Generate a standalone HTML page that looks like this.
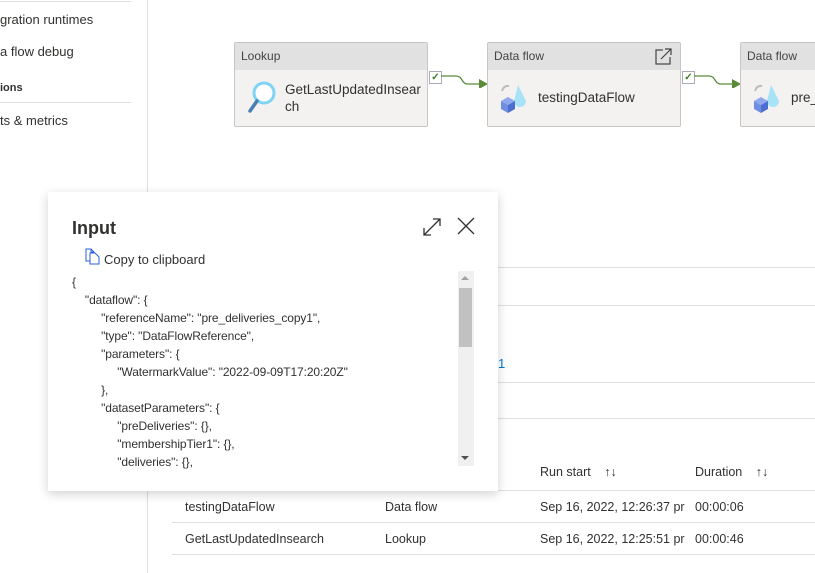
<!DOCTYPE html>
<html><head><style>
body{margin:0;width:815px;height:573px;position:relative;overflow:hidden;background:#fff;font-family:"Liberation Sans",sans-serif;color:#323130}
.a{position:absolute}
.hl{position:absolute;height:1px;background:#e1dfdd}
.node{position:absolute;width:194px;height:85px;background:#f3f2f1;border:1px solid #c8c6c4;border-radius:2px;box-sizing:border-box}
.node .h{height:27px;background:#e1e1e1;font-size:12px;line-height:27px;padding-left:6px;color:#444}
.node .t{position:absolute;font-size:13.5px;color:#323130;line-height:17px}
.chk{position:absolute;width:11px;height:11px;border:1px solid #aab;background:#fff;font-size:10px;line-height:11px;text-align:center;color:#3a7d2a;font-weight:bold}
.code{font-size:12px;line-height:18px;color:#323130;white-space:pre;letter-spacing:-0.1px}
.tb{font-size:12.5px;color:#323130}
</style></head><body>
<div class="a" style="left:147px;top:0;width:1px;height:573px;background:#e1dfdd"></div>
<div class="hl" style="left:0;top:1px;width:131px"></div>
<div class="a" style="left:0;top:12px;font-size:13px">gration runtimes</div>
<div class="a" style="left:0;top:44px;font-size:13px">a flow debug</div>
<div class="a" style="left:0;top:82px;font-size:11px;font-weight:bold">ions</div>
<div class="hl" style="left:0;top:102px;width:131px"></div>
<div class="a" style="left:0;top:113px;font-size:13px">ts &amp; metrics</div>

<div class="node" style="left:234px;top:42px"><div class="h">Lookup</div>
<svg class="a" style="left:12px;top:37px" width="30" height="36"><circle cx="17" cy="13" r="10" fill="#fff" stroke="#7fd3f5" stroke-width="3"/><line x1="10" y1="21" x2="3" y2="31" stroke="#4a7fb5" stroke-width="3.5" stroke-linecap="round"/></svg>
<div class="t" style="left:50px;top:38px">GetLastUpdatedInsear<br>ch</div></div>
<div class="chk" style="left:429px;top:71px">✓</div>
<svg class="a" style="left:441px;top:72px" width="48" height="16"><path d="M0 4 H15 C22 4 20 12 27 12 H40" fill="none" stroke="#5a8a3a" stroke-width="1.3"/><path d="M38 7 L47 12 L38 17Z" fill="#5a8a3a"/></svg>

<div class="node" style="left:487px;top:42px"><div class="h">Data flow</div>
<svg class="a" style="left:167px;top:4px" width="18" height="18"><rect x="1" y="3" width="14" height="14" fill="none" stroke="#444" stroke-width="1.2"/><rect x="8" y="0" width="10" height="10" fill="#e1e1e1"/><path d="M6 12 L16 2 M10 2 H16 V8" fill="none" stroke="#444" stroke-width="1.2"/></svg>
<svg class="a" style="left:10px;top:38px" width="32" height="34"><path d="M20 4 L28 20 A6 6 0 0 1 16 20Z" fill="#a8e2f7"/><path d="M4 10 Q6 4 11 5" fill="none" stroke="#bbb" stroke-width="2"/><path d="M3 20 L10 16 L17 20 L10 24Z" fill="#8fa8ee"/><path d="M3 20 L10 24 V32 L3 28Z" fill="#6f8ee0"/><path d="M10 24 L17 20 V28 L10 32Z" fill="#4c6ed0"/></svg>
<div class="t" style="left:50px;top:46px">testingDataFlow</div></div>
<div class="chk" style="left:682px;top:71px">✓</div>
<svg class="a" style="left:694px;top:72px" width="48" height="16"><path d="M0 4 H15 C22 4 20 12 27 12 H40" fill="none" stroke="#5a8a3a" stroke-width="1.3"/><path d="M38 7 L47 12 L38 17Z" fill="#5a8a3a"/></svg>

<div class="node" style="left:740px;top:42px;width:100px"><div class="h">Data flow</div>
<svg class="a" style="left:10px;top:38px" width="32" height="34"><path d="M20 4 L28 20 A6 6 0 0 1 16 20Z" fill="#a8e2f7"/><path d="M4 10 Q6 4 11 5" fill="none" stroke="#bbb" stroke-width="2"/><path d="M3 20 L10 16 L17 20 L10 24Z" fill="#8fa8ee"/><path d="M3 20 L10 24 V32 L3 28Z" fill="#6f8ee0"/><path d="M10 24 L17 20 V28 L10 32Z" fill="#4c6ed0"/></svg>
<div class="t" style="left:50px;top:46px">pre_</div></div>

<div class="hl" style="left:172px;top:267px;width:643px"></div>
<div class="hl" style="left:172px;top:305px;width:643px"></div>
<div class="hl" style="left:172px;top:382px;width:643px"></div>
<div class="hl" style="left:172px;top:418px;width:643px"></div>
<div class="a" style="left:498px;top:356px;font-size:13px;color:#0078d4">1</div>

<div class="a tb" style="left:540px;top:465px">Run start <span style="margin-left:10px">↑↓</span></div>
<div class="a tb" style="left:695px;top:465px">Duration <span style="margin-left:10px">↑↓</span></div>
<div class="hl" style="left:172px;top:490px;width:643px"></div>
<div class="a tb" style="left:185px;top:500px">testingDataFlow</div>
<div class="a tb" style="left:385px;top:500px">Data flow</div>
<div class="a tb" style="left:540px;top:500px">Sep 16, 2022, 12:26:37 pr</div>
<div class="a tb" style="left:695px;top:500px">00:00:06</div>
<div class="hl" style="left:172px;top:522px;width:643px"></div>
<div class="a tb" style="left:185px;top:532px">GetLastUpdatedInsearch</div>
<div class="a tb" style="left:385px;top:532px">Lookup</div>
<div class="a tb" style="left:540px;top:532px">Sep 16, 2022, 12:25:51 pr</div>
<div class="a tb" style="left:695px;top:532px">00:00:46</div>
<div class="hl" style="left:172px;top:554px;width:643px"></div>

<div class="a" style="left:48px;top:192px;width:450px;height:299px;background:#fff;box-shadow:0 3px 10px rgba(0,0,0,.18)">
<div class="a" style="left:24px;top:26px;font-size:18px;font-weight:bold;color:#323130">Input</div>
<svg class="a" style="left:374px;top:25px" width="20" height="20"><path d="M2 18 L18 2 M11 2 H18 V9 M2 11 V18 H9" fill="none" stroke="#323130" stroke-width="1.3"/></svg>
<svg class="a" style="left:409px;top:25px" width="18" height="18"><path d="M1 1 L17 17 M17 1 L1 17" stroke="#323130" stroke-width="1.3"/></svg>
<svg class="a" style="left:37px;top:56px" width="16" height="17"><path d="M1 1 H6 L9 4 V13 H1Z M6 1 V4 H9" fill="none" stroke="#2b5fd9" stroke-width="1"/><path d="M5 5 H10 L14 9 V16 H5Z" fill="#fff" stroke="#2b5fd9" stroke-width="1"/></svg>
<div class="a" style="left:56px;top:60px;font-size:13px">Copy to clipboard</div>
<div class="a code" style="left:24px;top:81px">{
    "dataflow": {
         "referenceName": "pre_deliveries_copy1",
         "type": "DataFlowReference",
         "parameters": {
              "WatermarkValue": "2022-09-09T17:20:20Z"
         },
         "datasetParameters": {
              "preDeliveries": {},
              "membershipTier1": {},
              "deliveries": {},</div>
<div class="a" style="left:410px;top:79px;width:16px;height:195px;background:#f0f0f0"></div>
<div class="a" style="left:411px;top:96px;width:13px;height:59px;background:#c1c1c1"></div>
<div class="a" style="left:413px;top:84px;width:0;height:0;border:4px solid transparent;border-bottom:4px solid #a0a0a0;border-top:0"></div>
<div class="a" style="left:413px;top:264px;width:0;height:0;border:4px solid transparent;border-top:4px solid #505050;border-bottom:0"></div>
</div>
</body></html>
